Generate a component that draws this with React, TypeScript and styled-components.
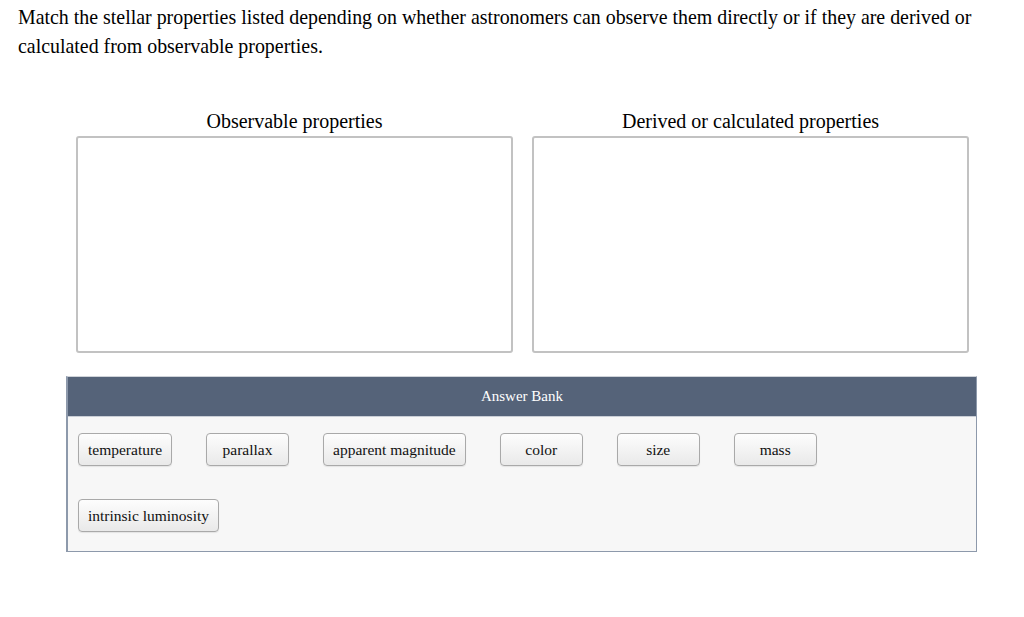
import styled, { createGlobalStyle } from "styled-components";

const GlobalStyle = createGlobalStyle`
  body {
    margin: 0;
    background: #fff;
    font-family: "Liberation Serif", "Times New Roman", serif;
    color: #000;
  }
`;

const Page = styled.div`
  padding: 3px 18px 0 18px;
`;

const Prompt = styled.p`
  margin: 0;
  font-size: 19.9px;
  line-height: 29px;
  max-width: 975px;
`;

const Board = styled.div`
  width: 911px;
  margin: 48px 0 0 48px;
`;

const Columns = styled.div`
  display: grid;
  grid-template-columns: 437px 437px;
  column-gap: 19px;
  padding: 0 9px 0 10px;
`;

const Column = styled.div`
  display: flex;
  flex-direction: column;
  align-items: center;
`;

const Heading = styled.div`
  font-size: 20px;
  line-height: 24px;
  height: 24px;
  margin-bottom: 3px;
`;

const DropZone = styled.div`
  width: 100%;
  box-sizing: border-box;
  height: 217px;
  border: 2px solid #c2c2c2;
  border-radius: 3px;
  background: #fff;
`;

const Bank = styled.div`
  margin-top: 23px;
  border: 1px solid #8d99ab;
  border-top-color: #cfd3d9;
  border-left-width: 2px;
`;

const BankHeader = styled.div`
  height: 39px;
  background: #556379;
  color: #fff;
  font-size: 15px;
  display: flex;
  align-items: center;
  justify-content: center;
  border-bottom: 1px solid #c9ced6;
`;

const BankBody = styled.div`
  background: #f7f7f7;
  min-height: 134px;
  box-sizing: border-box;
  padding: 16px 10px 17px 10px;
  display: flex;
  flex-wrap: wrap;
  column-gap: 34px;
  row-gap: 33px;
  align-content: flex-start;
`;

const Chip = styled.button`
  font-family: "Liberation Serif", "Times New Roman", serif;
  font-size: 15.5px;
  color: #111;
  height: 33px;
  min-width: 83px;
  padding: 0 9px;
  border: 1px solid #a9a9a9;
  border-radius: 4px;
  background: linear-gradient(to bottom, #fdfdfd, #e9e9e9);
  box-shadow: 0 1px 1px rgba(0, 0, 0, 0.08);
  cursor: grab;
`;

const columns = ["Observable properties", "Derived or calculated properties"];

const answers = [
  "temperature",
  "parallax",
  "apparent magnitude",
  "color",
  "size",
  "mass",
  "intrinsic luminosity",
];

export default function App() {
  return (
    <>
      <GlobalStyle />
      <Page>
        <Prompt>
          Match the stellar properties listed depending on whether astronomers can observe them
          directly or if they are derived or calculated from observable properties.
        </Prompt>
        <Board>
          <Columns>
            {columns.map((title) => (
              <Column key={title}>
                <Heading>{title}</Heading>
                <DropZone />
              </Column>
            ))}
          </Columns>
          <Bank>
            <BankHeader>Answer Bank</BankHeader>
            <BankBody>
              {answers.map((a) => (
                <Chip key={a}>{a}</Chip>
              ))}
            </BankBody>
          </Bank>
        </Board>
      </Page>
    </>
  );
}
